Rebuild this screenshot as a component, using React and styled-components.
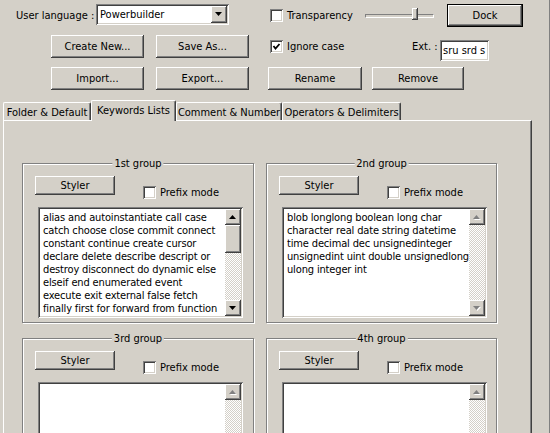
import styled, { createGlobalStyle } from "styled-components";

const GlobalStyle = createGlobalStyle`
  html, body {
    margin: 0;
    padding: 0;
    background: #d4d0c8;
  }
  body {
    font-family: "DejaVu Sans Condensed", Tahoma, "Liberation Sans", sans-serif;
    font-size: 11px;
    color: #000;
  }
  * { box-sizing: border-box; }
`;

const raised = `
  background: #d4d0c8;
  box-shadow: inset -1px -1px #404040, inset 1px 1px #fff,
    inset -2px -2px #808080, inset 2px 2px #d4d0c8;
`;

const sunken = `
  box-shadow: inset 1px 1px #808080, inset -1px -1px #fff,
    inset 2px 2px #404040, inset -2px -2px #d4d0c8;
`;

const Window = styled.div`
  width: 550px;
  height: 433px;
  overflow: hidden;
  padding-top: 4px;
  border-right: 1px solid #808080;
`;

const Row = styled.div`
  display: flex;
  align-items: center;
  height: 23px;
  margin-top: ${(p) => p.$mt || 0}px;
  padding-left: ${(p) => p.$pl}px;
`;

const Label = styled.span`
  flex: none;
  width: ${(p) => p.$w}px;
  margin-left: ${(p) => p.$ml || 0}px;
  white-space: nowrap;
`;

const Button = styled.button`
  ${raised}
  flex: none;
  width: ${(p) => p.$w}px;
  height: ${(p) => p.$h || 23}px;
  margin-left: ${(p) => p.$ml || 0}px;
  border: none;
  padding: 0;
  font: inherit;
  color: #000;
`;

const DefaultButton = styled(Button)`
  border: 1px solid #000;
`;

const Combo = styled.div`
  ${sunken}
  flex: none;
  align-self: flex-start;
  display: flex;
  align-items: center;
  justify-content: space-between;
  width: 133px;
  height: 21px;
  padding: 2px;
  background: #fff;
`;

const ComboText = styled.span`
  padding-left: 2px;
`;

const DropButton = styled.div`
  ${raised}
  width: 16px;
  height: 17px;
  display: flex;
  align-items: center;
  justify-content: center;
`;

const Check = styled.div`
  ${sunken}
  flex: none;
  width: 13px;
  height: 13px;
  background: #fff;
  margin-left: ${(p) => p.$ml || 0}px;
  display: flex;
  align-items: center;
  justify-content: center;
`;

const Slider = styled.div`
  position: relative;
  flex: none;
  width: 69px;
  height: 4px;
  margin-left: ${(p) => p.$ml || 0}px;
  border-top: 1px solid #808080;
  border-left: 1px solid #808080;
  border-bottom: 1px solid #fff;
  border-right: 1px solid #fff;
  background: #d4d0c8;
`;

const Thumb = styled.div`
  ${raised}
  position: absolute;
  left: 46px;
  top: -7px;
  width: 6px;
  height: 12px;
`;

const ExtInput = styled.div`
  ${sunken}
  flex: none;
  align-self: flex-start;
  margin-top: 5px;
  width: 49px;
  height: 21px;
  padding: 4px 3px 0;
  background: #fff;
  white-space: nowrap;
  overflow: hidden;
`;

const TabStrip = styled.div`
  display: flex;
  align-items: flex-end;
  height: 20px;
  margin-top: 10px;
  padding-left: 3px;
`;

const Tab = styled.div`
  flex: none;
  width: ${(p) => p.$w}px;
  height: ${(p) => (p.$active ? 21 : 18)}px;
  margin-bottom: ${(p) => (p.$active ? -1 : 0)}px;
  padding-top: 3px;
  text-align: center;
  white-space: nowrap;
  background: #d4d0c8;
  border-top: 1px solid #fff;
  border-left: 1px solid #fff;
  border-right: 1px solid #404040;
  border-radius: 2px 2px 0 0;
  box-shadow: inset -1px 0 #808080;
  position: relative;
  z-index: ${(p) => (p.$active ? 1 : 0)};
`;

const Panel = styled.div`
  margin-left: 3px;
  width: 529px;
  height: 320px;
  border-top: 1px solid #fff;
  border-left: 1px solid #fff;
  border-right: 1px solid #404040;
  box-shadow: inset -1px 0 #808080;
  padding: 42px 0 0 18px;
`;

const GroupGrid = styled.div`
  display: grid;
  grid-template-columns: 232px 231px;
  grid-auto-rows: 160px;
  column-gap: 12px;
  row-gap: 15px;
`;

const Group = styled.div`
  position: relative;
  border: 1px solid #808080;
  box-shadow: inset 1px 1px #fff, 1px 1px #fff;
  padding: 12px 0 0 12px;
`;

const GroupTitle = styled.span`
  position: absolute;
  top: -7px;
  left: 50%;
  transform: translateX(-50%);
  padding: 0 2px;
  background: #d4d0c8;
  white-space: nowrap;
  line-height: 13px;
`;

const GroupTop = styled.div`
  display: flex;
  align-items: flex-start;
`;

const PrefixWrap = styled.div`
  display: flex;
  align-items: center;
  margin: 10px 0 0 28px;
  gap: 4px;
`;

const TextBox = styled.div`
  ${sunken}
  display: flex;
  width: 205px;
  height: 111px;
  margin: 8px 0 0 3px;
  padding: 2px;
  background: #fff;
`;

const Lines = styled.div`
  flex: 1;
  min-width: 0;
  padding: 2px 3px;
  overflow: hidden;
  letter-spacing: -0.15px;
`;

const Line = styled.div`
  line-height: 13px;
  white-space: nowrap;
`;

const ScrollBar = styled.div`
  flex: none;
  width: 16px;
  display: flex;
  flex-direction: column;
  background-color: #fff;
  background-image: conic-gradient(#d4d0c8 25%, #fff 0 50%, #d4d0c8 0 75%, #fff 0);
  background-size: 2px 2px;
`;

const ScrollButton = styled.div`
  ${raised}
  flex: none;
  height: 16px;
  display: flex;
  align-items: center;
  justify-content: center;
`;

const ScrollThumb = styled.div`
  ${raised}
  flex: none;
  height: 28px;
`;

const Spacer = styled.div`
  flex: 1;
`;

function Arrow({ down, disabled }) {
  const pts = down ? "0,0 7,0 3.5,4" : "3.5,0 7,4 0,4";
  return (
    <svg width="8" height="5" viewBox="0 0 8 5">
      {disabled && (
        <polygon points={pts} fill="#fff" transform="translate(1,1)" />
      )}
      <polygon points={pts} fill={disabled ? "#808080" : "#000"} />
    </svg>
  );
}

function CheckMark() {
  return (
    <svg width="9" height="9" viewBox="0 0 9 9">
      <polyline
        points="1.5,4 3.5,6.5 7.5,2"
        fill="none"
        stroke="#000"
        strokeWidth="1.8"
      />
    </svg>
  );
}

const groups = [
  {
    title: "1st group",
    lines: [
      "alias and autoinstantiate call case",
      "catch choose close commit connect",
      "constant continue create cursor",
      "declare delete describe descript or",
      "destroy disconnect do dynamic else",
      "elseif end enumerated event",
      "execute exit external false fetch",
      "finally first for forward from function",
    ],
    scroll: true,
  },
  {
    title: "2nd group",
    lines: [
      "blob longlong boolean long char",
      "character real date string datetime",
      "time decimal dec unsignedinteger",
      "unsignedint uint double unsignedlong",
      "ulong integer int",
    ],
  },
  { title: "3rd group", lines: [] },
  { title: "4th group", lines: [] },
];

function KeywordGroup({ title, lines, scroll }) {
  return (
    <Group>
      <GroupTitle>{title}</GroupTitle>
      <GroupTop>
        <Button $w={80} $h={19}>Styler</Button>
        <PrefixWrap>
          <Check />
          <span>Prefix mode</span>
        </PrefixWrap>
      </GroupTop>
      <TextBox>
        <Lines>
          {lines.map((l) => (
            <Line key={l}>{l}</Line>
          ))}
        </Lines>
        <ScrollBar>
          <ScrollButton>
            <Arrow disabled={!scroll} />
          </ScrollButton>
          {scroll && <ScrollThumb />}
          <Spacer />
          <ScrollButton>
            <Arrow down disabled={!scroll} />
          </ScrollButton>
        </ScrollBar>
      </TextBox>
    </Group>
  );
}

export default function App() {
  return (
    <>
      <GlobalStyle />
      <Window>
        <Row $pl={16}>
          <Label $w={80}>User language :</Label>
          <Combo>
            <ComboText>Powerbuilder</ComboText>
            <DropButton>
              <Arrow down />
            </DropButton>
          </Combo>
          <Check $ml={41} />
          <Label $w={78} $ml={4}>Transparency</Label>
          <Slider>
            <Thumb />
          </Slider>
          <DefaultButton $w={76} $ml={13}>Dock</DefaultButton>
        </Row>
        <Row $pl={51} $mt={8}>
          <Button $w={93}>Create New...</Button>
          <Button $w={93} $ml={12}>Save As...</Button>
          <Check $ml={21}>
            <CheckMark />
          </Check>
          <Label $w={125} $ml={4}>Ignore case</Label>
          <Label $w={28}>Ext. :</Label>
          <ExtInput>sru srd s</ExtInput>
        </Row>
        <Row $pl={51} $mt={9}>
          <Button $w={93}>Import...</Button>
          <Button $w={93} $ml={12}>Export...</Button>
          <Button $w={94} $ml={19}>Rename</Button>
          <Button $w={92} $ml={10}>Remove</Button>
        </Row>
        <TabStrip>
          <Tab $w={88}>Folder &amp; Default</Tab>
          <Tab $w={85} $active>Keywords Lists</Tab>
          <Tab $w={106}>Comment &amp; Number</Tab>
          <Tab $w={119}>Operators &amp; Delimiters</Tab>
        </TabStrip>
        <Panel>
          <GroupGrid>
            {groups.map((g) => (
              <KeywordGroup key={g.title} {...g} />
            ))}
          </GroupGrid>
        </Panel>
      </Window>
    </>
  );
}
